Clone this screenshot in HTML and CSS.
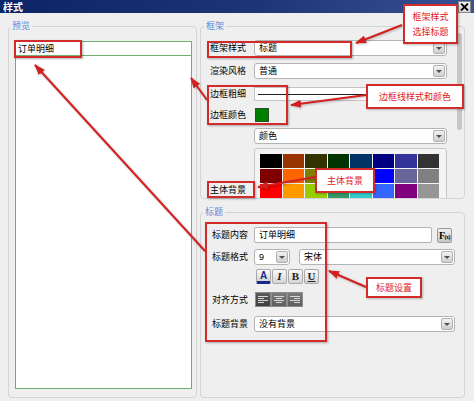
FILE: index.html
```html
<!DOCTYPE html>
<html lang="zh-CN">
<head>
<meta charset="utf-8">
<title>样式</title>
<link rel="stylesheet" href="styles.css">
</head>
<body>
<div class="window">
  <div class="titlebar">
    <span class="title">样式</span>
    <span class="close"><svg width="9" height="8" viewBox="0 0 9 8"><path d="M1 0.5 L8 7.5 M8 0.5 L1 7.5" stroke="#000" stroke-width="1.8"/></svg></span>
  </div>
  <div class="content">
    <fieldset class="group preview">
      <legend>预览</legend>
      <div class="preview-box">
        <div class="preview-head">订单明细</div>
      </div>
    </fieldset>
    <div class="right">
      <fieldset class="group frame">
        <legend>框架</legend>
        <div class="frame-scroll">
          <div class="frame-rows">
            <div class="row r-style">
              <span class="label">框架样式</span>
              <div class="select w-frame"><span class="val">标题</span><span class="drop"></span></div>
            </div>
            <div class="row r-render">
              <span class="label">渲染风格</span>
              <div class="select w-frame"><span class="val">普通</span><span class="drop"></span></div>
            </div>
            <div class="row r-width">
              <span class="label">边框粗细</span>
              <div class="linefield"><span class="line"></span></div>
            </div>
            <div class="row r-color">
              <span class="label">边框颜色</span>
              <span class="swatch"></span>
            </div>
            <div class="row r-colorsel">
              <span class="label"></span>
              <div class="select w-frame"><span class="val">颜色</span><span class="drop"></span></div>
            </div>
            <div class="row r-panel">
              <span class="label label-bg">主体背景</span>
              <div class="palette">
                <span class="c c1"></span><span class="c c2"></span><span class="c c3"></span><span class="c c4"></span><span class="c c5"></span><span class="c c6"></span><span class="c c7"></span><span class="c c8"></span>
                <span class="c c9"></span><span class="c c10"></span><span class="c c11"></span><span class="c c12"></span><span class="c c13"></span><span class="c c14"></span><span class="c c15"></span><span class="c c16"></span>
                <span class="c c17"></span><span class="c c18"></span><span class="c c19"></span><span class="c c20"></span><span class="c c21"></span><span class="c c22"></span><span class="c c23"></span><span class="c c24"></span>
                <span class="c c25"></span><span class="c c26"></span><span class="c c27"></span><span class="c c28"></span><span class="c c29"></span><span class="c c30"></span><span class="c c31"></span><span class="c c32"></span>
              </div>
            </div>
          </div>
          <div class="vscroll"><span class="thumb"></span></div>
        </div>
      </fieldset>
      <fieldset class="group titlegrp">
        <legend>标题</legend>
        <div class="trow t1">
          <span class="tlabel">标题内容</span>
          <div class="input">订单明细</div>
          <span class="fx">F<small>(x)</small></span>
        </div>
        <div class="trow t2">
          <span class="tlabel">标题格式</span>
          <div class="select w-size"><span class="val num">9</span><span class="drop"></span></div>
          <div class="select w-font"><span class="val">宋体</span><span class="drop"></span></div>
        </div>
        <div class="trow t3">
          <span class="tlabel"></span>
          <div class="fmt">
            <span class="fbtn fa">A</span>
            <span class="fbtn fi">I</span>
            <span class="fbtn fb">B</span>
            <span class="fbtn fu">U</span>
          </div>
        </div>
        <div class="trow t4">
          <span class="tlabel">对齐方式</span>
          <div class="align">
            <span class="abtn on"><svg width="10" height="8" viewBox="0 0 10 8"><path d="M0 0.5H10M0 2.5H6M0 4.5H10M0 6.5H6" stroke="#d8d8d8" stroke-width="1"/></svg></span>
            <span class="abtn"><svg width="10" height="8" viewBox="0 0 10 8"><path d="M0 0.5H10M2 2.5H8M0 4.5H10M2 6.5H8" stroke="#d8d8d8" stroke-width="1"/></svg></span>
            <span class="abtn"><svg width="10" height="8" viewBox="0 0 10 8"><path d="M0 0.5H10M4 2.5H10M0 4.5H10M4 6.5H10" stroke="#d8d8d8" stroke-width="1"/></svg></span>
          </div>
        </div>
        <div class="trow t5">
          <span class="tlabel">标题背景</span>
          <div class="select w-bg"><span class="val">没有背景</span><span class="drop"></span></div>
        </div>
      </fieldset>
    </div>
  </div>

  <div class="annotations">
    <svg class="arrows" width="474" height="401" viewBox="0 0 474 401">
      <defs>
        <marker id="ah" markerWidth="11" markerHeight="8" refX="10" refY="4" orient="auto" markerUnits="userSpaceOnUse">
          <path d="M0,0 L11,4 L0,8 z" fill="#d21f1f"/>
        </marker>
      </defs>
      <g stroke="#d21f1f" stroke-width="2" fill="none" marker-end="url(#ah)">
        <path d="M402,25 L356,43"/>
        <path d="M366,95 L291,105"/>
        <path d="M315,177 L258,187"/>
        <path d="M366,287 L329,271"/>
        <path d="M205,251 L35,65"/>
        <path d="M207,100 L191,78"/>
      </g>
    </svg>
    <span class="hl hl-preview"></span>
    <span class="hl hl-style"></span>
    <span class="hl hl-border"></span>
    <span class="hl hl-bg"></span>
    <span class="hl hl-title"></span>
    <span class="callout co-style">框架样式<br>选择标题</span>
    <span class="callout co-border">边框线样式和颜色</span>
    <span class="callout co-bg">主体背景</span>
    <span class="callout co-title">标题设置</span>
  </div>
</div>
</body>
</html>
```
FILE: styles.css
```css
* { box-sizing: border-box; }
html, body { margin: 0; padding: 0; }
body {
  width: 474px;
  height: 401px;
  overflow: hidden;
  background: #efefef;
  font-family: "Noto Sans CJK SC", "Noto Sans", sans-serif;
  font-size: 9px;
  color: #000;
}
.window { position: relative; width: 474px; height: 401px; }

/* title bar */
.titlebar {
  height: 13px;
  background: linear-gradient(to right, #0a2466, #1d3678 55%, #3a5293);
  display: flex;
  align-items: center;
  justify-content: space-between;
  padding: 0 3px 0 3px;
}
.title { color: #fff; font-weight: bold; font-size: 10px; line-height: 13px; }
.close {
  width: 13px; height: 12px;
  background: linear-gradient(#f4f4f4, #d6d6d6);
  border: 1px solid #8a8a8a;
  display: flex; align-items: center; justify-content: center;
}

.content {
  display: flex;
  gap: 3px;
  padding: 8px 9px 3px 8px;
  height: 388px;
}

.group {
  margin: 0;
  padding: 0;
  border: 1px solid #d4d4d4;
  border-radius: 4px;
  min-width: 0;
}
legend {
  color: #5f8bd6;
  font-size: 9px;
  line-height: 10px;
  padding: 0 2px;
  margin-left: 2px;
}

/* preview */
.preview { width: 189px; padding: 10px 4px 8px 6px; }
.preview legend { margin-left: -5px; }
.preview-box {
  height: 348px;
  background: #fff;
  border: 1px solid #6fae6f;
}
.preview-head {
  height: 14px;
  border-bottom: 1px solid #6fae6f;
  padding-left: 2px;
  line-height: 13px;
}

.right { width: 265px; display: flex; flex-direction: column; gap: 8px; }
.frame { height: 178px; }
.titlegrp { height: 191px; padding: 10px 0 0 11px; }
.titlegrp legend { margin-left: -9px; }
.frame legend { margin-left: 3px; }

.frame-scroll { height: 167px; display: flex; overflow: hidden; }
.frame-rows { width: 246px; padding: 9px 0 0 9px; }
.vscroll { width: 17px; padding: 2px 0 0 10px; }
.thumb { display: block; width: 5px; height: 97px; background: #c6c6c6; border-radius: 3px; }

.row { display: flex; align-items: center; }
.label { width: 44px; flex: none; line-height: 12px; }
.r-style, .r-render { height: 16px; margin-bottom: 7px; }
.r-width { height: 16px; margin-bottom: 6px; }
.r-color { height: 14px; margin-bottom: 6px; }
.r-colorsel { height: 16px; margin-bottom: 4px; }
.r-panel { align-items: flex-start; }
.label-bg { margin-top: 36px; }

/* select */
.select {
  height: 16px;
  background: #fff;
  border: 1px solid #b4b4b4;
  border-radius: 3px;
  display: flex;
  align-items: center;
  justify-content: space-between;
  padding-right: 1px;
}
.val { padding-left: 4px; line-height: 12px; }
.num { font-family: "Liberation Sans", sans-serif; }
.drop {
  width: 12px; height: 12px;
  border: 1px solid #b0b0b0;
  border-radius: 2px;
  background: linear-gradient(#f2f2f2, #cfcfcf);
  display: flex; align-items: center; justify-content: center;
}
.drop::after {
  content: "";
  border-left: 3px solid transparent;
  border-right: 3px solid transparent;
  border-top: 3px solid #505050;
}
.w-frame { width: 193px; }
.w-size { width: 36px; }
.w-font { width: 156px; margin-left: 9px; }
.w-bg { width: 201px; }

.linefield {
  width: 193px; height: 14px;
  background: #fff;
  border: 1px solid #c4c4c4;
  display: flex; align-items: center;
  padding: 0 6px 0 3px;
}
.line { display: block; height: 1px; width: 100%; background: #222; }
.swatch {
  width: 14px; height: 14px;
  background: #008000;
  border: 1px solid #2b4d2b;
  margin-left: 1px;
}

.palette {
  width: 193px;
  height: 120px;
  background: #f4f4f4;
  border: 1px solid #c6c6c6;
  border-radius: 3px;
  padding: 5px 0 0 5px;
  display: grid;
  grid-template-columns: repeat(8, 21.5px);
  grid-auto-rows: 14px;
  gap: 1px 1px;
  align-content: start;
}
.c { display: block; }
.c1 { background: #000000; } .c2 { background: #993300; } .c3 { background: #333300; } .c4 { background: #003300; }
.c5 { background: #003366; } .c6 { background: #000080; } .c7 { background: #333399; } .c8 { background: #333333; }
.c9 { background: #800000; } .c10 { background: #ff6600; } .c11 { background: #808000; } .c12 { background: #008000; }
.c13 { background: #008080; } .c14 { background: #0000ff; } .c15 { background: #666699; } .c16 { background: #808080; }
.c17 { background: #ff0000; } .c18 { background: #ff9900; } .c19 { background: #99cc00; } .c20 { background: #339966; }
.c21 { background: #33cccc; } .c22 { background: #3366ff; } .c23 { background: #800080; } .c24 { background: #969696; }
.c25 { background: #ff00ff; } .c26 { background: #ffcc00; } .c27 { background: #ffff00; } .c28 { background: #00ff00; }
.c29 { background: #00ffff; } .c30 { background: #00ccff; } .c31 { background: #993366; } .c32 { background: #c0c0c0; }

/* title group */
.trow { display: flex; align-items: center; }
.tlabel { width: 42px; flex: none; line-height: 12px; }
.t1 { height: 16px; margin-bottom: 6px; }
.t2 { height: 16px; margin-bottom: 4px; }
.t3 { height: 15px; margin-bottom: 8px; }
.t4 { height: 15px; margin-bottom: 9px; }
.t5 { height: 16px; }

.input {
  width: 178px; height: 16px;
  background: #fff;
  border: 1px solid #b4b4b4;
  border-radius: 2px;
  padding-left: 4px;
  line-height: 14px;
}
.fx {
  width: 15px; height: 15px;
  margin-left: 5px;
  border: 1px solid #9a9a9a;
  border-radius: 2px;
  background: linear-gradient(#f0f0f0, #c9c9c9);
  font-family: "Liberation Serif", serif;
  font-weight: bold;
  font-size: 10px;
  line-height: 13px;
  text-align: center;
  letter-spacing: -0.5px;
}
.fx small { font-size: 6px; }

.fmt { display: flex; gap: 1px; margin-left: 2px; }
.fbtn {
  width: 15px; height: 15px;
  border: 1px solid #a9a9a9;
  border-radius: 2px;
  background: linear-gradient(#fbfbfb, #d4d4d4);
  font-family: "Liberation Serif", serif;
  font-weight: bold;
  font-size: 11px;
  line-height: 13px;
  text-align: center;
  color: #222;
}
.fa { color: #1b2a8a; font-family: "Liberation Sans", sans-serif; font-size: 10px; line-height: 11px; border-bottom: 3px solid #1b2a8a; }
.fi { font-style: italic; }
.fu { text-decoration: underline; }

.align { display: flex; gap: 0; margin-left: 1px; }
.abtn {
  width: 16px; height: 15px;
  background: linear-gradient(#7a7a7a, #5e5e5e);
  border: 1px solid #8c8c8c;
  display: flex; align-items: center; justify-content: center;
}
.abtn.on { background: linear-gradient(#5a5a5a, #3e3e3e); }

/* annotations overlay */
.annotations { position: absolute; left: 0; top: 0; width: 474px; height: 401px; pointer-events: none; }
.arrows { position: absolute; left: 0; top: 0; filter: drop-shadow(1px 1px 1px rgba(0,0,0,0.25)); }
.hl {
  position: absolute;
  border: 2px solid #d22b2b;
  box-shadow: 1px 1px 2px rgba(0,0,0,0.3);
}
.hl-preview { left: 14px; top: 40px; width: 68px; height: 18px; }
.hl-style { left: 207px; top: 41px; width: 145px; height: 17px; }
.hl-border { left: 207px; top: 85px; width: 81px; height: 40px; }
.hl-bg { left: 207px; top: 181px; width: 48px; height: 17px; }
.hl-title { left: 205px; top: 222px; width: 122px; height: 120px; }

.callout {
  position: absolute;
  background: #fff;
  border: 2px solid #d22b2b;
  color: #e0201c;
  font-size: 9px;
  text-align: center;
  display: flex; align-items: center; justify-content: center;
  box-shadow: 1px 1px 2px rgba(0,0,0,0.25);
}
.co-style { left: 403px; top: 4px; width: 55px; height: 40px; line-height: 15px; }
.co-border { left: 366px; top: 84px; width: 98px; height: 25px; }
.co-bg { left: 315px; top: 168px; width: 60px; height: 25px; }
.co-title { left: 366px; top: 277px; width: 56px; height: 21px; }
```
